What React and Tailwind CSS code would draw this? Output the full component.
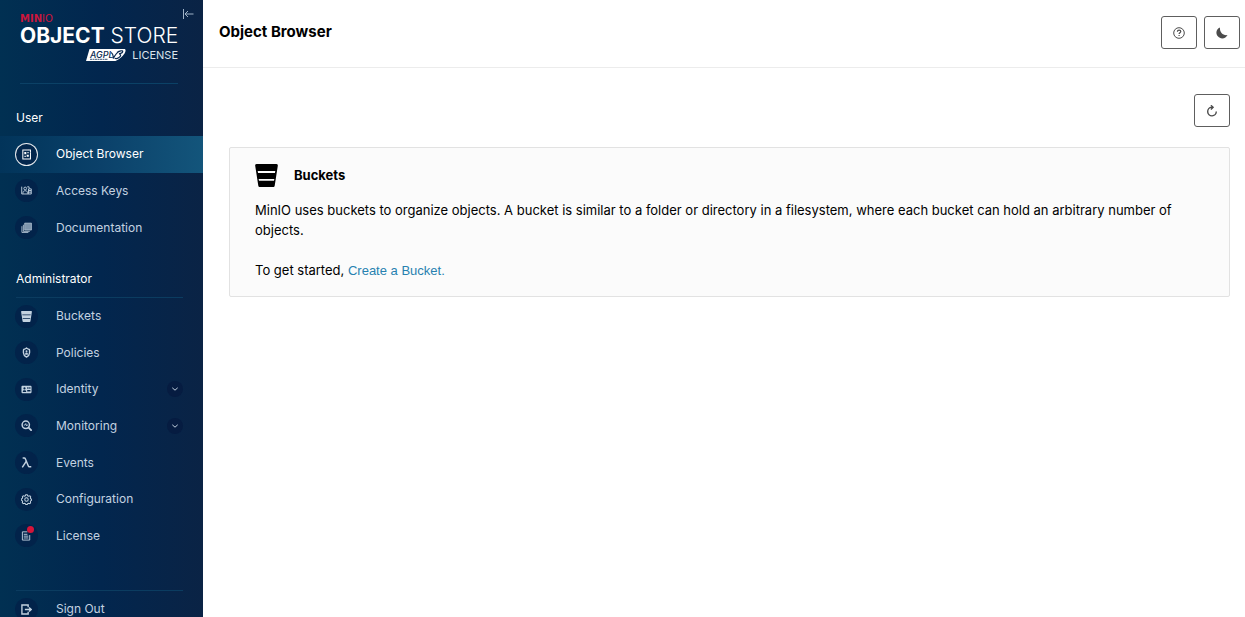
import React from "react";
import clsx from "clsx";

const icons = {
    browser: (
        <g fill="none" stroke="currentColor" strokeWidth="1.1">
            <path d="M8.5 1.2H2v9.6h8.3V3.6" />
            <path d="M8.2 1.2h2.1v2.4" />
            <path d="M3.6 3.4h2.2v2.2H3.6zM6.2 6.2h2.3v2.3H6.2z" fill="currentColor" stroke="none" />
            <path d="M7 3.4h1.3v1.3H7zM3.8 7.3h1.4v1.4H3.8z" fill="currentColor" stroke="none" />
        </g>
    ),
    keys: (
        <g fill="none" stroke="currentColor" strokeWidth="1">
            <path d="M.8 1.8v8h10.4V4.2H8.6" />
            <circle cx="4.6" cy="3.8" r="1.5" />
            <path d="M2.2 9.4V8c0-1 1-1.7 2.4-1.7S7 7 7 8v1.4M8.4 6h2.6M8.4 7.8h2.6M8.2 4.2v5.4M6.8 2h2v2" />
        </g>
    ),
    docs: (
        <g>
            <path d="M4 1.2h7.4v7.6H4z" fill="currentColor" fillOpacity="0.65" stroke="currentColor" strokeWidth="0.7" />
            <path d="M2.6 3v7.2h7M1 4.6v6.8h7" fill="none" stroke="currentColor" strokeWidth="0.9" />
        </g>
    ),
    bucket: (
        <path
            fill="currentColor"
            fillRule="evenodd"
            d="M.8 0h10.4c.5 0 .8.4.7.9l-1.6 10.3c-.1.5-.4.8-.9.8H2.6c-.5 0-.8-.3-.9-.8L.1.9C0 .4.3 0 .8 0zM1.4 3.7l.2 1h8.8l.2-1zM1.9 7.8l.2 1h7.8l.2-1z"
        />
    ),
    policies: (
        <g fill="none" stroke="currentColor">
            <path d="M6 1C5 1.900 4 2.200 2.900 2.600 2.600 3.600 2.600 5 2.700 6.500c.1 2 1.400 3.500 3.300 4.500 1.900-1 3.200-2.500 3.300-4.500.1-1.500.1-2.900-.2-3.900C8 2.200 7 1.900 6 1z" strokeWidth="1.500" strokeLinejoin="round" />
            <circle cx="6" cy="4.7" r="1.1" fill="currentColor" stroke="none" />
            <path d="M4.500 8.500V7.300c0-.8.7-1.300 1.500-1.300s1.500.5 1.500 1.300v1.200z" fill="currentColor" stroke="none" />
        </g>
    ),
    identity: (
        <path
            fill="currentColor"
            fillRule="evenodd"
            d="M1.4 2h9.2c.5 0 .9.4.9.9v6.2c0 .5-.4.9-.9.9H1.4a.9.9 0 0 1-.9-.9V2.9c0-.5.4-.9.9-.9zM6.8 3.6v1.6h1.4V3.6zm2.2 0v1.6h1.3V3.6zM6.8 6.6v1.7h3.5V6.6zM2 7.9v.7h3.6v-.7c0-.7-.7-1.2-1.8-1.2S2 7.2 2 7.9zM3.8 3.6a1.2 1.2 0 1 0 0 2.4 1.2 1.2 0 0 0 0-2.4z"
        />
    ),
    monitoring: (
        <g fill="none" stroke="currentColor" strokeLinecap="round">
            <circle cx="5.2" cy="5.2" r="4" strokeWidth="1.6" />
            <path d="M8.3 8.3l2.7 2.8" strokeWidth="2" />
            <path d="M3.4 5.5h1l.8-1.6.8 2.6.5-1h.7" strokeWidth="0.9" />
        </g>
    ),
    lambda: (
        <g fill="none" stroke="currentColor" strokeWidth="1.6">
            <path d="M1.800 1.200h1.800c.6 0 .9.300 1.100.8L8 9.900c.2.500.5.800 1 .8h2.200" />
            <path d="M5.700 4.800L1.400 11.400" />
        </g>
    ),
    config: (
        <g fill="none" stroke="currentColor" strokeWidth="1.1">
            <path d="M4.7 1.9L5.2.7h1.6l.5 1.2 1.2.5 1.2-.4.9 1-.4 1.3.5.9 1 .6v1.2l-1.1.5-.4 1 .3 1.2-1 .9-1.2-.4-1 .4-.5.9H5.2l-.5-1-1.1-.4-1.2.4-1-1 .4-1.2-.4-.9L.4 6.600V5.400l1-.5.4-1L1.500 2.800l1-.9 1.200.4z" />
            <circle cx="6" cy="6" r="1.9" />
        </g>
    ),
    license: (
        <g fill="none" stroke="currentColor" strokeWidth="1">
            <path d="M7 2H1.500v9h8V5.500" />
            <path d="M3 4.700h4M3 6.700h5M3 8.700h5" />
        </g>
    ),
    signout: (
        <g fill="none" stroke="currentColor" strokeWidth="1.5">
            <path d="M7.800 3.600V1.100H1v9.800h6.800V8.400" />
            <path d="M4.200 6h7M8.800 3.700L11.200 6 8.800 8.300" />
        </g>
    ),
};

function Icon({ name, className }) {
    return (
        <svg viewBox="0 0 12 12" className={clsx("shrink-0", className)} aria-hidden="true">
            {icons[name]}
        </svg>
    );
}

function MenuItem({ icon, label, active, expandable, alert }) {
    return (
        <li className="flex">
            <button
                type="button"
                className={clsx(
                    "flex w-full items-center pl-[15px] pr-5 text-left text-xs",
                    active
                        ? "bg-linear-to-r from-[#02345a] via-[#0b416a] to-[#13557b] text-white"
                        : "text-[#c3d2e0]"
                )}
            >
                <span
                    className={clsx(
                        "relative flex size-[23px] items-center justify-center rounded-full",
                        active ? "border border-white/90 bg-[#03274d]" : "bg-[#02234a]"
                    )}
                >
                    <Icon name={icon} className="size-[11px]" />
                    {alert && <span className="absolute right-1 top-0.5 size-[7px] rounded-full bg-[#d5153a]"></span>}
                </span>
                <span className="ml-[18px] flex-1">{label}</span>
                {expandable && (
                    <span className="flex size-4 items-center justify-center rounded-full bg-[#061c41]">
                        <svg viewBox="0 0 8 8" className="size-2" fill="none" stroke="currentColor" aria-hidden="true">
                            <path d="M1.3 2.8L4 5.2l2.7-2.4" />
                        </svg>
                    </span>
                )}
            </button>
        </li>
    );
}

function Logo() {
    return (
        <div className="ml-5 mr-[25px] flex h-[84px] shrink-0 flex-col border-b border-[#0b4166] pt-[13px] text-white">
            <div className="font-['DejaVu_Sans',sans-serif] text-[10px] leading-[11px] text-[#c9163c]">
                <span className="font-bold">MIN</span>
                <span>IO</span>
            </div>
            <div className="whitespace-nowrap text-[21px] leading-6">
                <span className="font-bold">OBJECT</span> <span className="font-light">STORE</span>
            </div>
            <div className="flex items-center justify-end gap-1.5 text-[11px] leading-3 text-[#dbe4ec]">
                <svg viewBox="0 0 40 14" className="h-[14px] w-10" aria-label="AGPL v3">
                    <path d="M3.500 1H38c2 0 2 2 .5 4.500-2 3-5 5.500-9 7.500H0z" fill="#fff" />
                    <text x="4" y="9.5" fontSize="9" fontStyle="italic" fontWeight="500" fill="#0a2a50">AGPL</text>
                    <path d="M4 11.3h18" stroke="#0a2a50" strokeWidth="0.8" strokeDasharray="2 .5" />
                    <path d="M25 4.500c2 1 2.300 3.500 2.300 6C29 7 31.500 4 34 3.200M31 4.500c2.500-2 6-2.300 5.700-.8-.2 1.300-2 2-3.700 2.200 2.500.2 2 2.300-.4 3.800-1.600 1-3.200 1.200-3.700.3" fill="none" stroke="#0a2a50" strokeWidth="1.2" />
                </svg>
                <span>LICENSE</span>
            </div>
        </div>
    );
}

function Sidebar() {
    return (
        <aside className="relative flex w-[203px] shrink-0 flex-col overflow-hidden bg-linear-to-r from-[#013052] via-[#02264e] to-[#0a2345]">
            <button type="button" aria-label="Collapse menu" className="absolute right-[9px] top-2 text-[#9fb2c6]">
                <svg viewBox="0 0 12 12" className="size-3" fill="none" stroke="currentColor">
                    <path d="M1.5 1v10M3 6h8.5M6 3L3 6l3 3" />
                </svg>
            </button>
            <Logo />
            <nav className="shrink-0">
                <h2 className="pl-4 pt-6 text-xs leading-5 text-white">User</h2>
                <ul className="mt-2 grid h-[110px] auto-rows-fr">
                    <MenuItem icon="browser" label="Object Browser" active />
                    <MenuItem icon="keys" label="Access Keys" />
                    <MenuItem icon="docs" label="Documentation" />
                </ul>
                <h2 className="ml-4 mr-5 mt-[23px] border-b border-[#0b3c60] pb-2 text-xs leading-5 text-white">
                    Administrator
                </h2>
                <ul className="grid h-64 auto-rows-fr">
                    <MenuItem icon="bucket" label="Buckets" />
                    <MenuItem icon="policies" label="Policies" />
                    <MenuItem icon="identity" label="Identity" expandable />
                    <MenuItem icon="monitoring" label="Monitoring" expandable />
                    <MenuItem icon="lambda" label="Events" />
                    <MenuItem icon="config" label="Configuration" />
                    <MenuItem icon="license" label="License" alert />
                </ul>
                <div className="ml-4 mr-5 mt-9 border-t border-[#0b3c60]"></div>
                <ul className="grid auto-rows-[36px]">
                    <MenuItem icon="signout" label="Sign Out" />
                </ul>
            </nav>
        </aside>
    );
}

function IconButton({ label, children }) {
    return (
        <button
            type="button"
            aria-label={label}
            className="flex h-[33px] w-9 items-center justify-center rounded-[3px] border border-[#5e5e5e] bg-white text-[#4b4b4b]"
        >
            {children}
        </button>
    );
}

export default function App() {
    return (
        <div className="flex h-screen bg-white font-['Inter',sans-serif] text-black">
            <Sidebar />
            <main className="min-w-0 flex-1">
                <header className="flex h-[68px] items-center justify-between border-b border-[#ececec] pb-0.5 pl-4 pr-[5px]">
                    <h1 className="text-[15px] font-bold">Object Browser</h1>
                    <div className="flex gap-[7px]">
                        <IconButton label="Help">
                            <svg viewBox="0 0 12 12" className="size-3" fill="none" stroke="currentColor" aria-hidden="true">
                                <circle cx="6" cy="6" r="5.3" />
                                <path d="M4.4 4.8c0-1 .7-1.6 1.7-1.6s1.700.6 1.700 1.400c0 1.200-1.700 1.200-1.700 2.500M6.100 7.900v1.200" strokeWidth="1.2" />
                            </svg>
                        </IconButton>
                        <IconButton label="Dark mode">
                            <svg viewBox="0 0 12 12" className="size-3" fill="currentColor" aria-hidden="true">
                                <path d="M4 .5C1.8 1.3.4 3.3.4 5.6c0 3.2 2.6 5.8 5.8 5.8 2.4 0 4.4-1.4 5.3-3.4-3.8 1-8.2-2.6-7.5-7.5z" />
                            </svg>
                        </IconButton>
                    </div>
                </header>
                <div className="flex flex-col items-end gap-5 pb-6 pl-[26px] pr-[15px] pt-[26px]">
                    <IconButton label="Refresh">
                        <svg viewBox="0 0 12 12" className="size-3" fill="none" stroke="currentColor" strokeWidth="1.4" aria-hidden="true">
                            <path d="M7 2.3H5.6A4.3 4.3 0 1 0 10.3 6.6" />
                            <path d="M4.9.3l2.2 2-2.2 2.2" />
                        </svg>
                    </IconButton>
                    <section className="w-full rounded-xs border border-[#e2e2e2] bg-[#fbfbfb] px-[25px] pb-[15px] pt-4">
                        <div className="flex items-center gap-4">
                            <Icon name="bucket" className="size-[23px]" />
                            <h2 className="text-[13px] font-bold">Buckets</h2>
                        </div>
                        <div className="mt-[13px] text-[13px] leading-5">
                            <p>
                                MinIO uses buckets to organize objects. A bucket is similar to a folder or directory in a filesystem, where each
                                bucket can hold an arbitrary number of objects.
                            </p>
                            <p className="mt-5">
                                To get started,{" "}
                                <a href="#create" className="font-['Liberation_Sans',sans-serif] text-[#2781b0]">Create a Bucket.</a>
                            </p>
                        </div>
                    </section>
                </div>
            </main>
        </div>
    );
}
